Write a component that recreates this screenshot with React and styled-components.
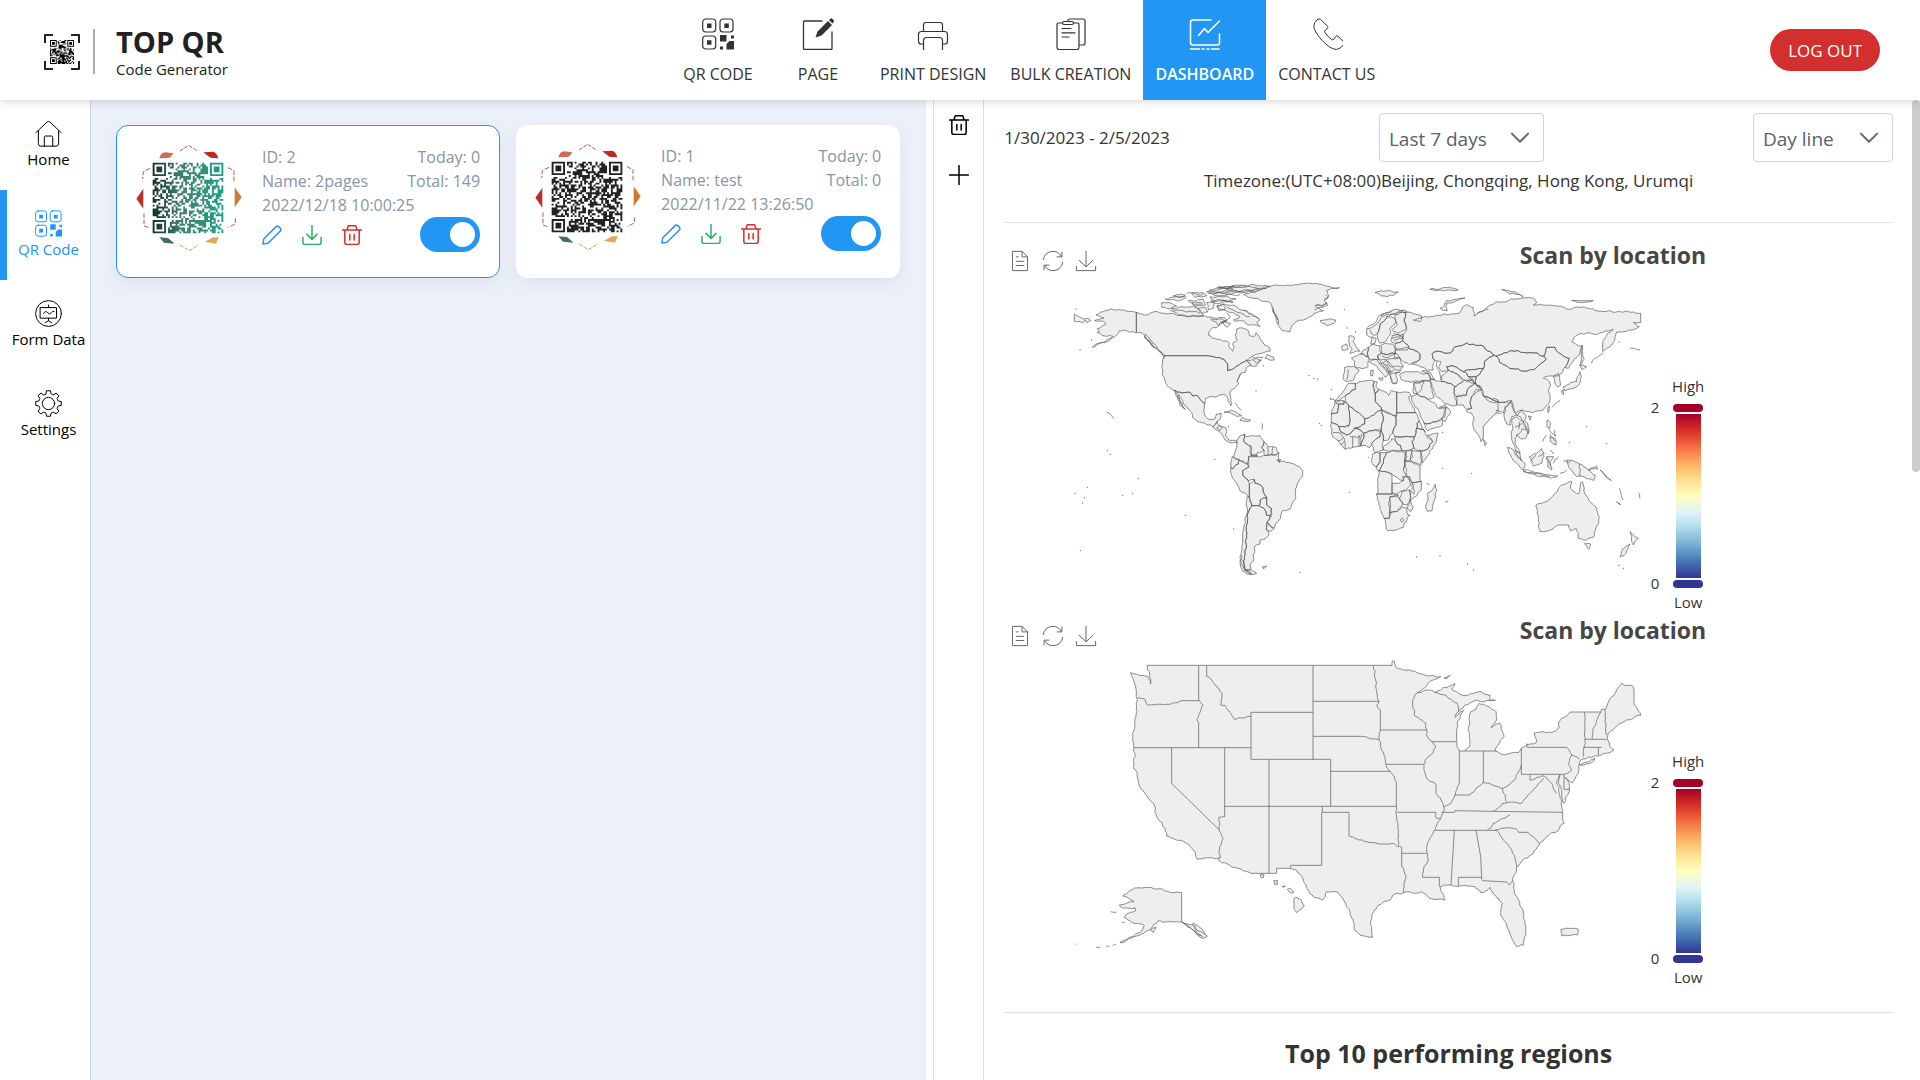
import React from 'react'
import styled, { createGlobalStyle } from 'styled-components'

const COLOR_BLUE = '#2196f3'
const COLOR_RED = '#d32f2f'
const COLOR_GREEN = '#28b463'
const COLOR_TEXT = '#333'
const COLOR_MUTED = '#8795a8'
const COLOR_BORDER = '#dee2e6'
const BACKGROUND_COLOR_LIST = '#ecf0f9'

const GlobalStyle = createGlobalStyle`
  * {
    box-sizing: border-box;
  }

  body {
    margin: 0;
    font-family: 'Open Sans', 'Noto Sans', sans-serif;
    font-size: 15px;
    line-height: 24px;
    color: ${COLOR_TEXT};
    background: #fff;
  }

  button {
    padding: 0;
    border: none;
    background: none;
    font: inherit;
    color: inherit;
    cursor: pointer;
  }

  svg {
    display: block;
  }
`

// Layout
//
const Page = styled.div`
  height: 100vh;
  display: flex;
  flex-direction: column;
  overflow: hidden;
`

const Header = styled.header`
  position: relative;
  z-index: 1;
  flex: none;
  height: 100px;
  display: flex;
  align-items: center;
  justify-content: space-between;
  padding-right: 40px;
  background: #fff;
  box-shadow: 0 2px 8px rgba(0, 0, 0, 0.15);
`

const Main = styled.main`
  flex: 1;
  min-height: 0;
  display: grid;
  grid-template-columns: 91px minmax(0, 9fr) 51px minmax(0, 10fr);
`

// Header
//
const Brand = styled.a`
  min-width: 285px;
  display: flex;
  align-items: center;
  padding: 3px 0 0 44px;
  color: #212121;
  text-decoration: none;
`

const BrandDivider = styled.span`
  width: 2px;
  height: 45px;
  margin: 0 21px 0 13px;
  background: #adadad;
`

const BrandText = styled.span`
  display: flex;
  flex-direction: column;
  line-height: 20px;
`

const BrandName = styled.strong`
  font-size: 29px;
  line-height: 34px;
`

const Nav = styled.nav`
  height: 100%;
  display: flex;
`

const NavLink = styled.a`
  min-width: 100px;
  display: flex;
  flex-direction: column;
  align-items: center;
  gap: 12px;
  padding: 18px 12px 0;
  text-decoration: none;
  font-size: 16px;
  color: ${({ $active }) => ($active ? '#fff' : COLOR_TEXT)};
  background: ${({ $active }) => ($active ? COLOR_BLUE : 'transparent')};
  font-weight: ${({ $active }) => ($active ? 600 : 400)};
`

const LogoutButton = styled.button`
  height: 42px;
  padding: 2px 18px 0;
  border-radius: 21px;
  color: #fff;
  background: ${COLOR_RED};
  font-size: 17px;
`

// Side menu
//
const SideMenu = styled.nav`
  border-right: 1px solid #c9d2e0;
`

const SideLink = styled.a`
  height: 90px;
  display: flex;
  flex-direction: column;
  align-items: center;
  padding-top: 20px;
  border-left: 7px solid ${({ $active }) => ($active ? COLOR_BLUE : 'transparent')};
  color: ${({ $active }) => ($active ? COLOR_BLUE : '#000')};
  text-decoration: none;
  white-space: nowrap;
`

// Code cards
//
const CodeList = styled.section`
  display: grid;
  grid-template-columns: repeat(2, minmax(0, 1fr));
  align-content: start;
  gap: 16px;
  margin-right: 7px;
  padding: 25px 26px 25px 25px;
  background: ${BACKGROUND_COLOR_LIST};
`

const Card = styled.article`
  height: 153px;
  display: flex;
  gap: 20px;
  padding: 19px;
  border: ${({ $selected }) => ($selected ? `1px solid ${COLOR_BLUE}` : 'none')};
  border-radius: 12px;
  background: #fff;
  box-shadow: 0 6px 16px rgba(120, 140, 170, 0.12);
`

const CardInfo = styled.div`
  flex: 1;
  color: ${COLOR_MUTED};
  font-size: 16px;
`

const CardRow = styled.div`
  display: flex;
  justify-content: space-between;
`

const CardActions = styled(CardRow)`
  align-items: center;
  height: 35px;
`

const ActionGroup = styled.div`
  display: flex;
  gap: 20px;
`

const IconButton = styled.button`
  display: flex;
  color: ${({ color }) => color};
`

const Toggle = styled.input`
  appearance: none;
  width: 60px;
  height: 35px;
  margin: 0;
  padding: 5px;
  display: flex;
  justify-content: flex-end;
  border-radius: 18px;
  background: ${COLOR_BLUE};
  cursor: pointer;

  &::before {
    content: '';
    width: 25px;
    height: 25px;
    border-radius: 50%;
    background: #fff;
  }

  &:not(:checked) {
    justify-content: flex-start;
    background: #bbb;
  }
`

const ToolRail = styled.aside`
  display: flex;
  flex-direction: column;
  align-items: center;
  gap: 30px;
  padding-top: 15px;
  border: solid #dcdfe4;
  border-width: 0 1px;
`

// Report
//
const Report = styled.section`
  position: relative;
  overflow: hidden;
  padding: 13px 27px 0 20px;
`

const ScrollThumb = styled.div`
  position: absolute;
  top: 0;
  right: 0;
  width: 8px;
  height: 38%;
  border-radius: 4px;
  background: #cdcdcd;
`

const FilterRow = styled.div`
  display: flex;
  align-items: center;
  justify-content: space-between;
  font-size: 17px;
`

const SelectBox = styled.div`
  display: grid;
  align-items: center;
  color: #5f6b78;

  > * {
    grid-area: 1 / 1;
  }

  svg {
    justify-self: end;
    margin-right: 14px;
    pointer-events: none;
  }
`

const Select = styled.select`
  appearance: none;
  width: ${({ $width }) => $width}px;
  height: 49px;
  padding: 3px 9px 0;
  border: 1px solid #ced4da;
  border-radius: 4px;
  background: #fff;
  color: #56616d;
  font: inherit;
  font-size: 19px;
`

const Timezone = styled.p`
  margin: 7px 0 29px;
  text-align: center;
  font-size: 17px;
`

const Divider = styled.hr`
  margin: 0;
  border: none;
  border-top: 1px solid ${COLOR_BORDER};
`

const ReportHeading = styled.h2`
  margin: 23px 0 0;
  text-align: center;
  font-size: 25px;
  line-height: 34px;
`

const Charts = styled.div`
  max-width: 702px;
  padding: 13px 0 26px;
`

const Chart = styled.figure`
  height: 375px;
  margin: 0;
`

const ChartHeader = styled.div`
  height: 44px;
  display: flex;
  justify-content: space-between;
  padding-left: 5px;
`

const ChartTools = styled.div`
  display: flex;
  align-items: center;
  gap: 11px;
  padding-top: 6px;
  color: #666;
`

const ChartTitle = styled.h3`
  margin: 2px 0 0;
  font-size: 23px;
  line-height: 34px;
  color: #464646;
`

const ChartBody = styled.div`
  display: flex;
  justify-content: space-between;
  padding-left: 70px;
`

const Legend = styled.div`
  display: grid;
  grid-template-columns: auto 30px;
  grid-template-rows: 28px 8px 164px 8px 24px;
  column-gap: 14px;
  row-gap: 2px;
  align-content: start;
  align-items: center;
  justify-items: center;
  margin: 94px 3px 0 0;
`

const LegendLabel = styled.span`
  grid-column: 2;
  align-self: start;
`

const LegendValue = styled.span`
  grid-column: 1;
  height: 26px;
`

const LegendHandle = styled.span`
  width: 30px;
  height: 8px;
  border-radius: 4px;
  background: ${({ color }) => color};
`

const LegendBar = styled.span`
  grid-column: 2;
  width: 25px;
  height: 100%;
  background: linear-gradient(
    #a50026,
    #d73027,
    #f46d43,
    #fdae61,
    #fee090,
    #ffffbf,
    #e0f3f8,
    #abd9e9,
    #74add1,
    #4575b4,
    #313695
  );
`

// Icons
//
const Icon = ({ size = 32, stroke = 1, children }) => (
  <svg
    width={size}
    height={size}
    viewBox="0 0 32 32"
    fill="none"
    stroke="currentColor"
    strokeWidth={(stroke * 32) / size}
    strokeLinecap="round"
    strokeLinejoin="round"
    aria-hidden="true"
  >
    {children}
  </svg>
)

const QrIcon = (props) => (
  <Icon {...props}>
    <rect x="0.7" y="1" width="13" height="13" rx="3" />
    <rect x="18" y="1" width="13" height="13" rx="3" />
    <rect x="0.7" y="18" width="13" height="13" rx="3" />
    <path
      fill="currentColor"
      stroke="none"
      d="M5 5.500h4.500v4.500H5zM22.300 5.500h4.500v4.500h-4.500zM5 22.300h4.500v4.500H5zM18 17h6.500v6.500H18zM29 17.500h3v3h-3zM18 28.500h3v3h-3zM24.500 26l3-3H32v8.500h-7.500z"
    />
  </Icon>
)

const PageIcon = () => (
  <Icon stroke={1.3}>
    <path d="M20 3H2.500Q1.500 3 1.500 4V30.500Q1.500 31.500 2.500 31.500H29Q30 31.500 30 30.500V14" />
    <path
      d="M13.500 19.500l2-6L26 3l4 4-10.500 10.500zM27 2l1.500-1.500q1-.7 2.200.4 1.800 1.700 1 3L30.500 5.500z"
      fill="currentColor"
      stroke="none"
    />
  </Icon>
)

const PrintIcon = () => (
  <Icon stroke={1.2}>
    <g transform="translate(1 4)">
      <path d="M5.500 9.500V3q0-2.500 2.500-2.500h14q2.500 0 2.500 2.500v6.500" />
      <path d="M5 22H3q-2.500 0-2.500-3v-6.500q0-3 3-3h23q3 0 3 3V19q0 3-2.500 3h-2" />
      <path d="M5.500 18.500q0-3 3-3h13q3 0 3 3v8q0 3-3 3h-13q-3 0-3-3z" />
    </g>
  </Icon>
)

const BulkIcon = () => (
  <Icon stroke={1.2}>
    <path d="M13 2.500q0-1.500 2-1.500h13q2 0 2 2v22q0 2-2 2h-3.500" />
    <path d="M7.500 5H4q-2 0-2 2v22.500q0 2 2 2h18q2 0 2-2V7q0-2-2-2h-3.500" />
    <path d="M9 3.500h8q1.500 0 1.500 1.500t-1.500 1.500H9Q7.500 6.500 7.500 5T9 3.500zM7 10.500h9M7 14.800h13M7 19h7" />
  </Icon>
)

const ChartIcon = () => (
  <Icon stroke={1.6}>
    <path d="M22 2H4Q1.500 2 1.500 4.500v20Q1.500 27 4 27h24q2.500 0 2.500-2.500V16" />
    <path d="M9.500 17.500l6-7 3.500 4L30.500 3M1.500 31h9M13 31h2M18 31h2M22.500 31H30" />
  </Icon>
)

const PhoneIcon = () => (
  <Icon>
    <path
      transform="translate(2 0)"
      d="M4.500 1.500Q1 4 .8 8q0 5 8 14 8 9 14.500 9.500 3.500 0 8-5.500.6-1-.5-2l-6-6q-1-.7-2 .3l-2 3q-1.200 1-2.500 0-4-3-6.500-7-.5-1.300.5-2.200l2-1.500q1-1 .2-2.300l-7-7q-1.300-1-3 .2z"
    />
  </Icon>
)

const HomeIcon = () => (
  <Icon size={27}>
    <path d="M1 15L14.500 2.300q1.500-1 3 0L31 15M4 13v15q0 3 3 3h18q3 0 3-3V13M11 31V20.500q0-1.500 1.500-1.500h7q1.500 0 1.500 1.500V31" />
  </Icon>
)

const BoardIcon = () => (
  <Icon size={27}>
    <circle cx="16" cy="16" r="15.300" />
    <path d="M16 6v3M6.500 9h19v12.500h-19zM10 16q3-4 5-1t4.500 0q1.500-2.500 3-1.500M16 21.500v3l-4 2.500M16 24.500l4 2.500" />
  </Icon>
)

const GEAR_TOOTH = [
  [-14, 12],
  [-9, 15.3],
  [9, 15.3],
  [14, 12],
]

const GEAR_PATH = Array.from({ length: 8 }, (_, i) => {
  const points = GEAR_TOOTH.map(([angle, radius]) => {
    const a = ((i * 45 + angle) * Math.PI) / 180
    return `${(16 + radius * Math.sin(a)).toFixed(1)} ${(16 - radius * Math.cos(a)).toFixed(1)}`
  })
  return `${i ? 'A5 5 0 0 0 ' : 'M'}${points.join('L')}`
}).join('')

const GearIcon = () => (
  <Icon size={27}>
    <path d={`${GEAR_PATH}Z`} />
    <circle cx="16" cy="16" r="7.300" />
  </Icon>
)

const PencilIcon = () => (
  <Icon size={20} stroke={1.5}>
    <path d="M1.500 30.500l1.200-8L22.500 2.600q2-1.800 4.200 0l2.700 2.700q1.800 2 0 4.200L9.500 29.300z" />
  </Icon>
)

const DownloadIcon = () => (
  <Icon size={20} stroke={1.5}>
    <path d="M16 1v21M8 15l8 8 8-8M1.500 20v8q0 3 3 3h23q3 0 3-3v-8" />
  </Icon>
)

const TrashIcon = () => (
  <Icon size={20} stroke={1.5}>
    <path d="M1 8h30M8 8l1.500-5.500q.5-1.500 2-1.500h9q1.500 0 2 1.500L24 8M4.500 8v20q0 3 3 3h17q3 0 3-3V8M12.500 15v9M19.500 15v9" />
  </Icon>
)

const PlusIcon = () => (
  <Icon size={20} stroke={1.5}>
    <path d="M16 1v30M1 16h30" />
  </Icon>
)

const DocIcon = () => (
  <Icon size={22}>
    <path d="M5 2h14l8 8v20H5zM19 2v8h8M10 10h4M10 16.500h12M10 22.500h12" strokeLinecap="butt" />
  </Icon>
)

const RefreshIcon = () => (
  <Icon size={22}>
    <path d="M2 14a14 14 0 0 1 26-5M30 18a14 14 0 0 1-26 5M29 3v7h-7M3 29v-7h7" />
  </Icon>
)

const SaveIcon = () => (
  <Icon size={22}>
    <path d="M16 2v22M6 15l10 9.500L26 15M2 24v6h28v-6" />
  </Icon>
)

const ChevronIcon = () => (
  <Icon size={20} stroke={2}>
    <path d="M3 9l13 13L29 9" />
  </Icon>
)

// QR drawing
//
const isFinder = (x, y, count) => (x < 8 && y < 8) || (x >= count - 8 && y < 8) || (x < 8 && y >= count - 8)

const qrPath = (count, seed) => {
  let state = seed
  let path = ''
  for (let y = 0; y < count; y++) {
    for (let x = 0; x < count; x++) {
      state = (state * 16807) % 2147483647
      if (state > 1000000000 && !isFinder(x, y, count)) {
        path += `M${x} ${y}h1v1h-1z`
      }
    }
  }
  const far = count - 7
  const corners = [
    [0, 0],
    [far, 0],
    [0, far],
  ]
  corners.forEach(([x, y]) => {
    path += `M${x} ${y}h7v7h-7zM${x + 1} ${y + 1}v5h5v-5zM${x + 2} ${y + 2}h3v3h-3z`
  })
  return path
}

const CARD_QR_PATH = qrPath(37, 7001)
const LOGO_QR_PATH = qrPath(25, 42001)

const Logo = () => (
  <svg width="36" height="36" viewBox="0 0 36 36" aria-hidden="true">
    <path d="M1 9V1h8M27 1h8v8M35 27v8h-8M9 35H1v-8" fill="none" stroke="#212121" strokeWidth="2" strokeLinejoin="round" />
    <path d={LOGO_QR_PATH} transform="translate(6 6) scale(0.96)" />
  </svg>
)

const CardQr = ({ name, green }) => (
  <svg width="106" height="106" viewBox="0 0 318 318" role="img" aria-label={name}>
    <defs>
      <linearGradient id="qr-green" x1="0" x2="1">
        <stop offset="0" stopColor="#16302c" />
        <stop offset="0.4" stopColor="#40806e" />
        <stop offset="1" stopColor="#1fa085" />
      </linearGradient>
    </defs>
    <path d={CARD_QR_PATH} transform="translate(50 53) scale(5.73)" fill={green ? 'url(#qr-green)' : '#222'} />
    <g fill="none" strokeWidth="3" stroke="#c9564a">
      <path d="M132 18l26-17 26 17" strokeDasharray="12 4" />
      <path d="M42 70l-20 10-2 22M276 68l18 9v33M298 220v17l-21 10M24 205v38l18 6" strokeDasharray="14 5" />
      <path d="M132 300l28 17 29-17" stroke="#e0a050" strokeDasharray="12 4" />
    </g>
    <path d="M70 40q4-18 18-18l24 3q-8 14-16 14z" fill="#d0695c" />
    <path d="M202 22l30-2q10 2 15 20l-24-2z" fill="#bd2a24" />
    <path d="M296 127l21 30-21 30z" fill="#cf7a30" />
    <path d="M22 131L1 161l21 30z" fill="#b93229" />
    <path d="M70 277l26 2 20 17-32-3z" fill="#466c5f" />
    <path d="M206 290l26-13h16l-8 19z" fill="#e2a85a" />
  </svg>
)

// Maps
//
// Adds small bends to every slanted edge, the same ones for both
// regions that share the edge.
const noise = (value) => {
  const n = Math.sin(value) * 43758.5453
  return n - Math.floor(n) - 0.5
}

const bend = ([x1, y1], [x2, y2], out) => {
  const length = Math.hypot(x2 - x1, y2 - y1)
  if (length > 8 && x1 !== x2 && y1 !== y2) {
    const key = (x1 + x2) * 0.731 + (y1 + y2) * 1.913
    const middle = [
      (x1 + x2) / 2 + noise(key) * Math.min(length * 0.28, 7),
      (y1 + y2) / 2 + noise(key + 5) * Math.min(length * 0.28, 7),
    ]
    bend([x1, y1], middle, out)
    bend(middle, [x2, y2], out)
  } else {
    out.push(`${x2.toFixed(1)} ${y2.toFixed(1)}`)
  }
}

const toPath = (line, closed) => {
  const points = line.split(' ').map((pair) => pair.split(',').map(Number))
  if (closed) points.push(points[0])
  const out = [points[0].join(' ')]
  for (let i = 1; i < points.length; i++) bend(points[i - 1], points[i], out)
  return `M${out.join('L')}${closed ? 'Z' : ''}`
}

const shapes = (text) =>
  text
    .trim()
    .split('\n')
    .map((line) => toPath(line.trim(), true))
    .join('')

const lines = (text) =>
  text
    .trim()
    .split('\n')
    .map((line) => toPath(line.trim(), false))
    .join('')

const AMERICAS = shapes(`
229,157 155,147 135,152 108,165 132,174 104,182 134,186 136,194 112,205 118,215 112,218 126,227 158,229 130,247 97,262 150,240 172,224 178,212 190,211 229,218
43,163 60,172 80,175 92,182 80,188 76,180 68,189 43,184
229,157 248,163 290,154 330,160 350,166 388,170 450,171 470,175 490,172 500,180 482,186 478,196 455,205 446,226 470,237 500,243 508,250 507,262 518,274 522,262 518,250 532,240 526,226 530,207 548,204 565,212 568,226 582,230 588,218 600,236 612,253 628,262 630,274 600,280 575,290 562,300 580,297 605,300 590,318 572,316 560,300 535,316 503,332 503,312 490,297 470,293 445,287 314,287 296,270 280,262 270,245 255,225 229,218
314,287 445,287 470,293 490,297 503,312 503,332 535,316 560,300 572,316 558,325 556,337 540,342 536,355 532,362 535,372 524,385 510,398 512,412 516,430 512,438 504,425 500,408 485,404 470,410 455,409 437,415 434,432 420,418 412,407 398,408 390,397 366,399 342,391 325,380 312,352 307,345 308,310 310,296
342,391 366,399 390,397 398,408 412,407 420,418 434,432 431,450 437,470 450,479 465,476 470,462 484,460 481,474 472,484 460,500 440,494 415,486 397,472 395,458 380,440 364,415 356,404 360,425 376,448 360,436 350,410
460,500 472,484 478,498 495,501 500,515 496,528 506,540 528,541 530,549 512,548 495,540 484,520 468,509
470,504 478,498 488,502 480,512
492,457 515,450 545,468 525,466 510,457
540,482 548,472 572,480 560,485
551,104 590,92 618,80 680,76 735,70 790,75 838,83 800,92 806,108 792,122 803,133 765,137 790,152 762,160 735,178 705,187 690,216 668,213 655,195 646,170 632,130 600,120 565,112
780,182 800,179 828,180 822,190 800,196 788,190
305,128 330,128 350,138 330,146 306,142
335,145 400,138 420,150 430,168 370,165 345,158
316,117 345,110 378,112 350,122
340,108 362,102 376,106 356,111
395,100 430,98 440,108 405,112
385,122 430,118 436,135 405,140
396,128 420,126 428,132 402,136
440,95 480,88 520,77 580,73 630,80 590,94 540,98 500,104 460,105
448,90 490,84 520,88 480,96
500,86 560,80 596,86 540,94
450,110 500,108 528,118 500,124 456,120
452,122 490,120 520,126 480,130
440,128 462,126 460,145 446,150
412,146 436,142 444,156 428,160
470,140 490,132 530,140 560,155 600,178 590,188 600,200 570,196 550,182 520,180 540,170 520,158 490,150
472,136 490,132 496,148 476,152
475,80 520,76 500,88
486,185 512,190 500,202
452,178 480,176 500,184 476,196
615,295 622,283 642,292 642,300
530,541 553,522 550,540 556,550 573,558 574,585 592,585 566,590 562,612 548,606 540,600 520,590 527,570
553,522 560,530 600,527 612,545 605,562 612,570 592,578 590,590 575,588 573,558 556,550 550,540
612,545 625,560 648,562 657,578 645,585 614,586 612,570 605,562
516,590 538,600 535,612 518,627 512,610
538,600 562,612 566,622 548,632 552,650 564,662 568,672 568,712 540,692 512,636 512,622 518,627 535,612
566,590 592,590 614,586 645,585 657,578 655,602 680,608 706,615 728,632 727,650 710,678 707,715 695,740 665,755 662,775 642,805 622,788 636,762 634,745 620,735 620,712 610,695 608,682 585,670 583,658 564,662 552,650 548,632 566,622
568,672 583,658 585,670 608,682 620,712 600,720 598,737 575,737 568,715
600,720 620,712 620,735 634,745 632,768 620,766 618,755 598,737
622,788 642,805 632,814 618,808
575,737 598,737 618,755 620,766 634,768 620,788 618,808 626,825 618,835 600,840 600,852 585,858 580,885 582,895 570,915 572,928 556,930 550,910 555,870 560,830 562,790 568,750
562,710 568,712 575,737 568,750 562,790 560,830 555,870 550,910 556,930 575,942 560,942 542,922 540,890 548,850 548,820 555,790 560,740
556,930 575,930 590,940 570,945
606,922 620,918 612,926
650,600 662,598 658,608
`)

const AMERICAS_LINES = lines(`
624,560 622,585
638,562 636,585
252,228 262,240 270,250 282,262
256,222 270,238 284,252 296,272 312,296
254,232 268,242 276,258 290,268
294,270 304,280 316,290
346,394 354,412 366,430 374,446
526,428 532,440 545,452
140,457 152,464 162,474
634,140 642,160 652,180
640,150 650,170 655,192
768,135 788,140 800,126
764,150 780,142 804,136
792,118 804,112 796,104
540,900 546,915 556,932 572,940
544,885 550,905 552,925
484,190 500,182 510,170 500,160
605,490 607,508
578,300 590,310 600,300
575,290 588,294 610,292
530,365 538,350 545,342
460,100 520,94 580,92 620,84
445,100 470,98 500,102 540,104
550,150 575,162 596,176
470,84 510,80 560,76
380,100 410,104 430,102
330,152 350,150 380,156 420,160
500,140 520,150 545,160 570,170
`)

const OLD_WORLD = shapes(`
78,350 85,340 105,340 106,358 76,377 60,388 50,402 44,392 66,370
44,392 72,392 72,402 55,402 53,428 34,432
72,394 85,405 86,468 56,470 34,458 34,432 53,428 55,402 72,402
105,340 135,332 162,334 160,352 166,372 166,395 185,420 134,446 85,405 76,392 76,377 106,358
162,334 172,336 168,350 176,358 166,372 160,352
166,372 176,358 198,366 206,376 214,362 230,366 230,438 185,420 166,395
230,366 268,368 272,378 266,380 288,428 230,428
85,405 134,446 134,462 104,474 92,490 80,495 60,482 56,470 86,468
134,446 185,420 190,440 183,480 150,482 130,490 118,478 104,474 134,462
185,420 228,438 228,465 218,490 205,510 190,512 183,480 190,440
230,428 288,428 298,452 290,475 284,500 240,502 224,500 218,490 228,465 228,438
224,500 284,500 276,515 282,535 258,542 248,542 228,515
290,475 312,480 318,495 338,515 325,535 300,542 282,535 276,515 284,500
298,452 316,485 312,480 290,475
322,495 354,490 350,510 306,580 300,542 325,535 338,515
276,540 300,542 306,560 302,588 274,575
258,542 276,540 278,560 270,572 256,572
254,572 274,575 300,590 300,620 304,635 276,637 260,620
200,548 222,542 254,545 258,560 254,580 250,600 258,618 250,632 238,628 216,612 200,606 176,602 190,580
190,530 215,506 228,515 248,542 222,542 190,540
160,540 155,520 180,500 183,480 190,512 186,530 190,540 165,548
122,528 132,490 150,482 180,484 180,500 155,520 148,533 135,525
158,552 180,548 180,575 170,592 154,572
180,548 200,548 190,580 176,602 168,596 180,575
176,602 200,606 216,612 216,640 216,672 170,672 174,640
216,640 238,640 250,632 248,620 270,620 272,645 246,662 232,672 216,668
276,637 304,635 304,660 272,690 280,710 270,725 262,715 270,688 268,660 282,672 280,650
246,665 268,660 270,688 262,705 248,702 236,686
210,680 236,680 248,702 230,725 208,728
170,672 216,672 236,676 210,680 208,745 192,745 180,710
192,745 208,745 208,728 230,725 248,710 262,715 264,735 270,735 250,772 230,780 204,783 198,770
240,750 247,744 252,750 246,757
346,643 351,660 336,722 322,724 318,705 324,685 322,670 338,660
34,458 56,470 60,482 80,495 92,490 104,474 118,478 132,490 122,528 100,532 75,538 55,515 38,500 36,480
74,292 112,296 118,300 104,318 98,332 82,335 70,328
94,264 118,252 130,252 145,262 148,270 144,290 126,296 108,294 104,275
145,232 160,222 180,228 184,250 172,258 176,268 150,268 142,250
122,252 130,240 145,232 142,250 145,262 130,252
148,276 170,268 178,280 205,312 196,322 190,314 165,285
152,302 160,300 158,318 152,316
176,324 188,322 186,332
182,226 205,222 222,226 226,250 200,254 184,248
176,268 172,258 184,250 200,254 226,250 240,264 250,290 240,305 225,310 230,338 218,340 205,305 185,282
226,240 262,232 300,252 300,268 275,280 268,284 250,275 240,264 222,262 226,250
226,220 248,212 266,228 262,240 228,240
216,196 250,192 248,212 226,220 212,212
140,175 165,165 185,135 215,122 255,120 262,126 230,132 200,140 180,165 172,190 155,202 140,195
172,190 180,165 200,140 225,148 228,155 210,175 212,190 196,215 180,220
228,155 225,135 255,128 252,150 260,175 240,188 220,185 216,178 232,165
152,222 156,204 168,204 165,220
86,198 104,202 100,214 110,232 120,244 90,250 96,238 88,225
66,228 80,222 84,238 68,242
262,126 305,138 300,155 280,150 330,140 370,132 420,128 428,110 440,104 460,112 462,138 480,125 500,112 530,95 600,86 640,84 650,98 640,105 720,108 750,118 780,112 860,124 940,126 962,130 962,158 940,158 958,170 890,186 885,200 868,232 848,244 848,215 860,195 880,178 840,188 820,192 780,190 755,215 770,225 785,228 778,255 745,295 735,292 748,265 715,248 705,232 680,232 672,258 640,248 600,246 575,242 528,258 522,255 490,228 440,218 400,236 395,246 345,245 336,252 345,272 338,285 340,300 320,300 290,285 275,282 300,268 300,252 266,232 266,228 248,212 250,192 260,175 252,150 255,128
345,245 395,246 400,236 440,218 490,228 522,255 495,272 490,295 450,300 430,305 400,288 380,290 385,300 365,305 355,290 362,275 345,272 336,252
528,258 575,242 600,246 640,248 672,258 678,268 650,292 625,302 580,296 540,278
522,255 528,258 540,278 580,296 625,302 650,292 678,268 672,258 680,232 705,232 715,248 748,265 735,292 725,310 710,318 690,318 670,325 688,335 692,345 685,365 690,390 670,420 640,428 620,425 605,420 588,430 575,400 560,395 540,398 515,388 490,378 485,355 465,340 468,320 490,295 495,272
380,290 400,288 430,305 445,320 455,330 440,335 415,315 385,300
365,318 385,300 415,315 428,335 405,350 365,335
430,305 450,300 490,295 468,320 445,320
445,320 468,320 465,340 455,330
330,328 345,330 365,335 405,350 402,370 408,390 410,405 375,400 350,380 335,350
405,350 428,335 455,330 465,340 450,350 440,375 410,380 402,370
410,405 408,380 440,375 450,350 465,340 485,358 460,375 450,395 455,415 440,418 430,405
460,375 470,358 485,358 490,378 515,388 540,398 560,395 575,392 560,410 552,430 545,425 530,420 528,432 490,468 490,505 482,515 462,480 455,430 440,425 442,418 455,415 450,395
490,378 515,388 535,390 535,398 510,396
488,508 500,520 494,527
240,312 270,304 300,308 325,310 332,330 300,334 270,336 245,330
305,304 330,306 345,330 332,328 325,310
282,338 310,332 330,334 342,382 325,388 290,372
282,338 312,334 305,356 290,372 280,370
275,378 290,372 325,388 345,400 355,415 380,412 375,440 340,455 312,460 300,430 275,390
312,460 340,455 365,448 368,465 322,482
365,448 380,412 392,425 375,455
358,412 376,404 380,412
555,410 575,392 582,420 590,435 575,440 572,465 560,462 552,440
578,445 590,440 610,455 625,480 620,500 605,508 590,495 585,520 600,550 585,540 575,500
590,435 605,420 618,436 614,452 628,478 625,492 610,455
562,532 580,540 615,580 612,600 590,580
586,540 600,550 604,572 592,560
610,604 660,612 690,622 650,618
628,560 650,550 665,535 672,550 665,580 640,588
680,560 700,560 690,575 695,600 682,590
682,450 692,460 690,475 680,470
690,500 705,505 708,525 692,515
740,570 780,582 825,615 820,632 795,622 770,620 755,600
730,350 770,335 780,305 784,320 776,345 735,362
778,285 800,290 785,298
786,225 792,265 782,285
700,320 715,310 722,345 712,350
625,438 634,440 630,450
682,415 688,408 684,428
648,705 690,688 715,655 740,640 755,635 752,655 775,672 780,640 788,635 800,680 830,715 838,740 822,800 800,810 775,805 768,775 752,782 745,765 715,765 690,780 660,785 655,750
794,820 812,822 806,838
930,785 945,800 955,805 940,825 935,815
930,822 918,850 900,860 904,845
165,68 200,62 235,66 220,76 185,78
330,58 400,55 415,60 350,62
360,115 380,92 435,84 380,100 382,122
545,58 575,65 610,80 570,72
755,92 820,92 780,98
725,362 732,360 730,374
805,600 830,588 832,598
840,600 850,608 874,632 860,622
890,695 902,704 894,700
`)

const OLD_WORLD_LINES = lines(`
84,298 80,330
38,488 60,488 70,502 76,538
98,500 98,533
117,495 117,530
125,492 122,528
52,512 70,503
60,525 74,515
90,500 122,498
172,258 176,268 215,266 240,264
185,258 205,262 226,252
178,280 200,272 212,290 240,300
200,272 218,288 248,290
195,282 208,296 214,312 238,308
190,278 200,292 210,310 218,332
205,305 222,300
213,204 250,203
222,210 248,205
258,545 250,600
262,620 276,637 276,660
655,560 670,548
778,582 780,620
585,470 605,460
590,495 605,478 620,480
600,455 596,478
352,272 350,290 362,330
700,580 715,560
720,610 740,600
730,572 745,580 752,572
610,602 640,606 680,614 712,620
690,628 705,622 715,616
898,655 908,690
955,668 960,685
704,480 706,500
686,478 696,490 708,498
690,492 700,505 706,515
668,515 680,495
690,540 700,552
680,562 686,575 692,590
648,555 632,575
815,280 850,248
720,392 696,412
895,215 900,218
930,235 960,240
320,640 328,645
375,696 385,692
534,400 532,430 545,432
150,180 160,195
142,172 160,162 182,134 215,124
185,138 250,122
220,190 245,198
212,335 222,342 232,340
455,322 470,345 485,352
445,330 462,340 480,348
470,130 485,124 505,118
30,385 44,388
`)

const US_OUTLINE = shapes(`
261,76 940,76 996,76 998,62 1004,64 1007,80 1030,90 1050,90 1070,98 1100,108 1142,110 1105,128 1072,158 1105,150 1125,158 1165,140 1185,131 1175,148 1200,163 1225,165 1260,154 1290,166 1288,180 1306,181 1270,185 1250,180 1215,195 1198,212 1185,232 1202,214 1212,210 1195,240 1190,270 1190,305 1198,333 1215,333 1228,320 1230,300 1225,265 1228,240 1232,215 1248,208 1258,190 1280,198 1308,215 1310,240 1293,262 1320,250 1332,290 1318,310 1306,333 1335,345 1375,338 1384,325 1430,305 1422,280 1480,275 1498,262 1496,248 1530,216 1622,216 1625,208 1636,208 1648,180 1660,168 1684,130 1692,136 1715,136 1722,148 1722,192 1740,218 1742,226 1700,240 1670,258 1645,280 1642,295 1650,320 1662,330 1640,340 1625,345 1600,350 1565,358 1558,372 1555,400 1538,428 1515,412 1528,440 1528,455 1512,490 1505,470 1505,450 1495,430 1500,405 1490,425 1498,440 1500,470 1505,500 1508,517 1508,540 1512,550 1495,572 1460,590 1438,610 1420,640 1395,655 1370,680 1358,722 1370,770 1390,820 1397,870 1390,915 1370,920 1355,895 1325,830 1328,790 1290,742 1262,758 1235,738 1200,737 1170,735 1140,740 1155,780 1110,775 1085,755 1030,758 1005,762 990,780 955,795 938,820 932,850 938,892 900,885 885,872 880,840 850,780 835,758 800,755 788,780 762,772 740,745 730,720 692,685 650,685 650,700 573,700 475,660 481,652 412,658 405,635 380,610 350,600 320,588 315,565 290,530 285,500 270,480 258,465 238,435 232,400 220,382 226,350 222,323 218,290 228,230 232,178 228,150 212,98 240,106 262,108 272,132 268,95
1558,374 1605,355 1598,366 1565,376
1152,114 1170,106 1160,116
365,758 265,742 215,750 188,768 222,785 178,795 190,805 225,803 228,812 205,820 192,832 220,850 253,857 240,878 180,908 205,897 230,888 270,870 295,842 330,845 365,846
365,846 390,855 402,850 415,858 442,888 425,895 400,870
272,870 288,862 280,878
600,704 612,704 610,713 602,712
641,722 653,722 652,733 644,734
666,739 676,737 672,742
682,748 690,745 702,756 694,760
706,772 724,780 733,798 710,818 702,798
1503,868 1520,864 1555,868 1552,885 1505,888
`)

const US_LINES = lines(`
416,76 416,182
232,175 255,178 262,195 300,193 330,192 365,182 418,182
418,182 430,195 410,238 416,248 416,323
222,323 573,323
440,76 440,110 486,160 482,195 495,196 523,238 573,230
573,217 759,217
573,217 573,358 812,358 812,499
759,76 759,358
759,184 957,184
759,289 905,289 930,296 957,300
812,394 990,394
494,499 1009,499
627,358 627,700
494,323 494,530 476,532 478,570
335,323 335,430
478,570 490,595 478,630 481,652
787,499 787,517 867,517 867,588 900,600 930,608 960,612 1000,610 1012,620 1025,622
785,517 785,676 692,676 692,685
940,76 947,120 957,184
957,184 950,195 961,210 961,270 957,300
961,270 1100,270
1072,158 1058,180 1058,200 1062,225 1098,250 1100,270
1100,270 1105,295 1128,320 1105,350 1092,373
1115,305 1190,305
978,373 1092,373
957,300 978,373 990,394 1009,425 1009,499
1125,158 1165,175 1192,190 1195,215
1092,375 1105,420 1128,435 1128,460 1150,495 1152,512
1198,333 1198,430 1185,465 1172,490 1150,500
1270,333 1270,428
1215,333 1306,333
1384,325 1384,403 1512,403
1185,465 1230,465 1270,428 1328,445
1328,445 1365,418 1384,375
1145,517 1183,517
1125,571 1310,571
1012,517 1128,517 1130,535 1140,535
1009,499 1015,617
1025,640 1100,640
1025,622 1025,680 1038,712 1030,758
1152,512 1140,540 1120,575 1100,620 1105,660 1090,690 1088,712 1138,712 1138,740
1195,737 1195,712 1265,712 1268,722
1348,735 1358,722
1310,571 1330,600 1358,640 1370,680
1305,571 1340,563 1370,568 1376,577 1404,577 1438,610
1283,570 1300,550 1350,525
1300,514 1340,488 1328,445
1340,488 1385,490 1410,460 1430,440 1452,415
1400,310 1402,322 1520,322 1535,345 1525,370 1535,390 1512,403
1410,405 1410,420 1452,408 1475,430 1490,460
1512,403 1512,448 1528,448
1535,345 1558,358
1572,216 1575,298 1570,350
1622,216 1600,265 1597,296
1635,208 1638,250 1640,285
1575,298 1640,298
1570,322 1625,322
1615,322 1615,345
366,846 392,864 410,880 430,892
396,852 412,872 436,884
404,856 408,878 426,888
168,912 158,916
148,918 138,919
120,922 108,922
152,815 170,816
186,846 194,847
44,911 47,913
`)

// Borders that run dead straight on a slant
const US_STRAIGHT =
  'M335 430L478 570M1183 571L1173 735M1248 571L1262 650L1265 712M1268 722L1340 726L1348 735M1183 517L1185 512L1300 514L1508 517'

const WORLD_DOTS = [
  [48, 147], [95, 240], [60, 270], [82, 683], [45, 701], [74, 713], [67, 729], [188, 706], [218, 700], [235, 655],
  [142, 572], [151, 583], [465, 599], [377, 766], [521, 807], [61, 871], [747, 347], [762, 355], [773, 357],
  [814, 389], [812, 417], [778, 490], [784, 497], [588, 393], [853, 149], [861, 204], [887, 216], [720, 937],
  [1148, 625], [1235, 641], [1222, 912], [1240, 930], [1070, 891], [1140, 887], [1580, 500], [1529, 547], [1640, 551],
  [1677, 916], [1690, 925], [868, 697], [925, 592], [255, 233], [610, 318], [505, 500], [1148, 517], [982, 127],
]

const MapSvg = styled.svg`
  flex: none;
  width: 568px;
  height: 300px;
  overflow: visible;
  fill: #eee;
  stroke: #555;
  stroke-width: 2px;
  stroke-linejoin: round;
`

const WorldMap = () => (
  <MapSvg viewBox="0 0 1704 900" role="img" aria-label="World map">
    <g transform="translate(-42 -60)">
      <path d={AMERICAS} />
      <path d={AMERICAS_LINES} fill="none" />
      {WORLD_DOTS.map(([x, y]) => (
        <circle key={`${x}-${y}`} cx={x} cy={y} r="1" />
      ))}
    </g>
    <g transform="translate(738 -30)">
      <path d={OLD_WORLD} />
      <path d={OLD_WORLD_LINES} fill="none" />
    </g>
  </MapSvg>
)

const UsMap = () => (
  <MapSvg viewBox="0 0 1704 900" role="img" aria-label="United States map">
    <g transform="translate(-42 -45)">
      <path d={US_OUTLINE} />
      <path d={US_LINES} fill="none" />
      <path d={US_STRAIGHT} fill="none" />
    </g>
  </MapSvg>
)

// Page parts
//
const NAV_ITEMS = [
  { label: 'QR CODE', icon: <QrIcon stroke={1.2} /> },
  { label: 'PAGE', icon: <PageIcon /> },
  { label: 'PRINT DESIGN', icon: <PrintIcon /> },
  { label: 'BULK CREATION', icon: <BulkIcon /> },
  { label: 'DASHBOARD', icon: <ChartIcon />, active: true },
  { label: 'CONTACT US', icon: <PhoneIcon /> },
]

const SIDE_ITEMS = [
  { label: 'Home', icon: <HomeIcon /> },
  { label: 'QR Code', icon: <QrIcon size={27} />, active: true },
  { label: 'Form Data', icon: <BoardIcon /> },
  { label: 'Settings', icon: <GearIcon /> },
]

const CODES = [
  { id: 2, name: '2pages', today: 0, total: 149, date: '2022/12/18 10:00:25', green: true, selected: true },
  { id: 1, name: 'test', today: 0, total: 0, date: '2022/11/22 13:26:50' },
]

const CodeCard = ({ code }) => (
  <Card $selected={code.selected}>
    <CardQr name={`QR code ${code.name}`} green={code.green} />
    <CardInfo>
      <CardRow>
        <span>ID: {code.id}</span>
        <span>Today: {code.today}</span>
      </CardRow>
      <CardRow>
        <span>Name: {code.name}</span>
        <span>Total: {code.total}</span>
      </CardRow>
      <CardRow>{code.date}</CardRow>
      <CardActions>
        <ActionGroup>
          <IconButton color="#2f8ff5" aria-label="Edit">
            <PencilIcon />
          </IconButton>
          <IconButton color={COLOR_GREEN} aria-label="Download">
            <DownloadIcon />
          </IconButton>
          <IconButton color={COLOR_RED} aria-label="Delete">
            <TrashIcon />
          </IconButton>
        </ActionGroup>
        <Toggle type="checkbox" defaultChecked aria-label={`Enable ${code.name}`} />
      </CardActions>
    </CardInfo>
  </Card>
)

const Dropdown = ({ label, width, options }) => (
  <SelectBox>
    <Select $width={width} aria-label={label}>
      {options.map((option) => (
        <option key={option}>{option}</option>
      ))}
    </Select>
    <ChevronIcon />
  </SelectBox>
)

const LocationChart = ({ children }) => (
  <Chart>
    <ChartHeader>
      <ChartTools>
        <IconButton aria-label="Data view">
          <DocIcon />
        </IconButton>
        <IconButton aria-label="Restore">
          <RefreshIcon />
        </IconButton>
        <IconButton aria-label="Save as image">
          <SaveIcon />
        </IconButton>
      </ChartTools>
      <ChartTitle>Scan by location</ChartTitle>
    </ChartHeader>
    <ChartBody>
      {children}
      <Legend>
        <LegendLabel>High</LegendLabel>
        <LegendValue>2</LegendValue>
        <LegendHandle color="#a50026" />
        <LegendBar />
        <LegendValue>0</LegendValue>
        <LegendHandle color="#313695" />
        <LegendLabel>Low</LegendLabel>
      </Legend>
    </ChartBody>
  </Chart>
)

const App = () => (
  <Page>
    <GlobalStyle />
    <Header>
      <Brand href="#">
        <Logo />
        <BrandDivider />
        <BrandText>
          <BrandName>TOP QR</BrandName>
          Code Generator
        </BrandText>
      </Brand>
      <Nav>
        {NAV_ITEMS.map(({ label, icon, active }) => (
          <NavLink key={label} href="#" $active={active}>
            {icon}
            {label}
          </NavLink>
        ))}
      </Nav>
      <LogoutButton>LOG OUT</LogoutButton>
    </Header>
    <Main>
      <SideMenu>
        {SIDE_ITEMS.map(({ label, icon, active }) => (
          <SideLink key={label} href="#" $active={active}>
            {icon}
            {label}
          </SideLink>
        ))}
      </SideMenu>
      <CodeList>
        {CODES.map((code) => (
          <CodeCard key={code.id} code={code} />
        ))}
      </CodeList>
      <ToolRail>
        <IconButton color="#000" aria-label="Delete selected">
          <TrashIcon />
        </IconButton>
        <IconButton color="#000" aria-label="Add">
          <PlusIcon />
        </IconButton>
      </ToolRail>
      <Report>
        <FilterRow>
          <span>1/30/2023 - 2/5/2023</span>
          <Dropdown label="Period" width={165} options={['Last 7 days', 'Last 30 days']} />
          <Dropdown label="Line type" width={140} options={['Day line', 'Hour line']} />
        </FilterRow>
        <Timezone>Timezone:(UTC+08:00)Beijing, Chongqing, Hong Kong, Urumqi</Timezone>
        <Divider />
        <Charts>
          <LocationChart>
            <WorldMap />
          </LocationChart>
          <LocationChart>
            <UsMap />
          </LocationChart>
        </Charts>
        <Divider />
        <ReportHeading>Top 10 performing regions</ReportHeading>
        <ScrollThumb />
      </Report>
    </Main>
  </Page>
)

export default App
